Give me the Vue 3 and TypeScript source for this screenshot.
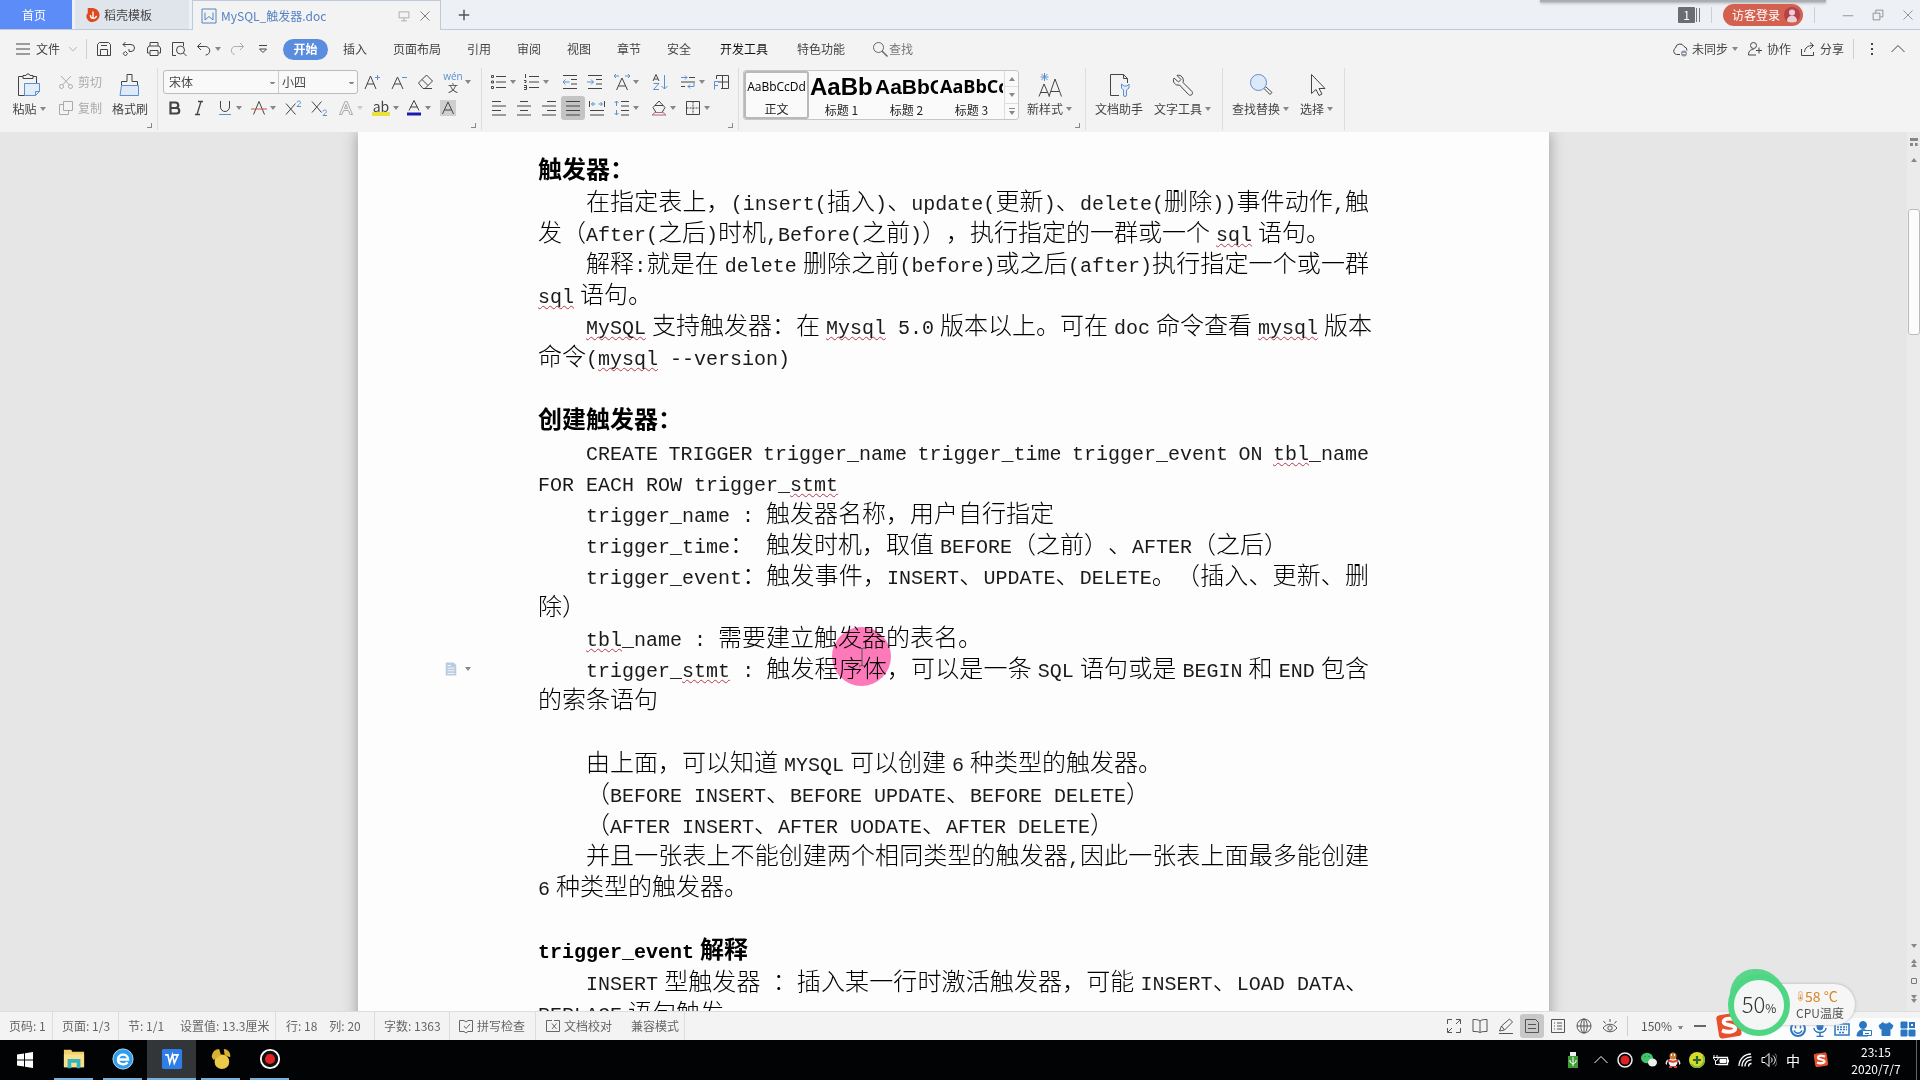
<script setup lang="ts">
import { ref } from 'vue'

interface Run { text: string; latin: boolean; err: boolean; before: boolean; after: boolean }
interface Line { src: string; indent?: boolean; full?: boolean; spread?: boolean }
interface Block { kind: 'h' | 'p' | 'blank'; lines: Line[] }
interface Tool { icon: string; label: string; w: number; size?: number; caret?: boolean; on?: boolean; dim?: boolean }

const icons: Record<string, string> = {
  menu: '<path d="M1 3h14M1 8h14M1 13h14"/>',
  chevDown: '<path d="M3 5.500l5 5 5-5"/>',
  chevUp: '<path d="M1.500 11L8 4.500 14.500 11"/>',
  save: '<path d="M1.500 14.500v-11l2-2h9l2 2v11zM4.500 14V8.500h7V14M5 4.500h6"/>',
  export: '<path d="M2 3.500h8a3.500 3.500 0 0 1 0 7H8M4.500 1L2 3.500 4.500 6M2 12.500l2.500-2 2 2-2 2.500zM8 10.500V8"/>',
  print: '<path d="M4 5V1.500h8V5M3.500 12h-2V7l1.500-2h10l1.500 2v5h-2M4 9.500h8v5H4z"/>',
  preview: '<path d="M5 14.500H1.500v-13h11V5"/><circle cx="9.500" cy="9" r="4"/><path d="M12.500 12l3 3"/>',
  undo: '<path d="M5 2L1.500 5.500 5 9M1.500 5.500h8a4 4 0 0 1 0 8.500"/>',
  redo: '<path d="M11 2l3.500 3.500L11 9M14.500 5.500h-7a4 4 0 0 0-2 8"/>',
  more: '<path d="M4 4.500h8M4.500 8l3.500 3.500L11.500 8z"/>',
  search: '<circle cx="6.500" cy="6.500" r="5"/><path d="M10 10l5.500 5.500" stroke-width="1.500"/>',
  cloud: '<path d="M8 13.500H4.500A3.500 3.500 0 0 1 3.500 7 4.500 4.500 0 0 1 12 5.500a4 4 0 0 1 3 4"/><circle cx="12" cy="12.500" r="3" fill="#8f96a8" stroke="none"/><path d="M10.500 12.500h3" stroke="#fff"/>',
  collab: '<circle cx="6.500" cy="4.500" r="3"/><path d="M1.500 14c0-5 3-5.500 5-5.500M1.500 14H9M12 6.500v6M9 9.500h6"/>',
  share: '<path d="M1.500 8v6.500h12V11M4.500 11C5 6.500 8 4.500 13 4.500M10 1.500l3.500 3L10 8"/>',
  dots: '<path d="M8 2v2M8 7v2M8 12v2" stroke-width="2"/>',
  cut: '<path d="M3 2l8.500 9M13 2L4.500 11"/><circle cx="3.500" cy="12.500" r="2"/><circle cx="12.500" cy="12.500" r="2"/>',
  copy: '<path d="M5.500 1.500h9v9h-9z"/><path d="M5 4.500H1.500v10h9V11"/>',
  paste: '<path d="M6 3.500H1.500v19H9M16 3.500h3.500V10M6 5.500v-3h3l1-1.500h2l1 1.500h3v3z"/><path d="M7.500 10.500h15v8l-4 4h-11z" fill="#e3edfa" stroke="#5b8fd0"/><path d="M22.500 18.500h-4v4" stroke="#5b8fd0"/>',
  brush: '<path d="M3.500 12.500V8.500H9v-7h5v7h5.500v4"/><path d="M3.500 12.500h17v10H2z" fill="#dfe9f8" stroke="#5b8fd0"/>',
  aPlus: '<path d="M1 15L6.500 2 12 15M3 10h7"/><path d="M13.500 1v5M11 3.500h5" stroke="#5b8fd0"/>',
  aMinus: '<path d="M1 15L6.500 3 12 15M3 10h7"/><path d="M11 3.500h5" stroke="#5b8fd0"/>',
  eraser: '<path d="M1.500 9l8-8 6 6-7.500 7.500H6zM5 5.500l6 6M6 14.500h9"/>',
  bold: '<path d="M3.500 2.500h5a2.500 2.500 0 0 1 0 5.500h-5zM3.500 8h6a2.700 2.700 0 0 1 0 5.500h-6z" stroke-width="2.200"/>',
  italic: '<path d="M6 1.500h5M3 14.500h5M9 1.500l-4 13" stroke-width="1.300"/>',
  underline: '<path d="M3.500 1v6a4.500 4.500 0 0 0 9 0V1"/><path d="M2 14.500h12" stroke="#5b8fd0"/>',
  strike: '<path d="M2.500 14.500L8 1.500l5.500 13"/><path d="M0 9h16" stroke="#d0504a"/>',
  sup: '<path d="M1 3.500l9.500 11M10.500 3.500L1 14.500"/><path d="M12 2.500c0-2 3.500-2 3.500 0 0 1.200-2 2-3.500 4h4" stroke="#5b8fd0"/>',
  sub: '<path d="M1 1.500l9.500 11M10.500 1.500L1 12.500"/><path d="M12 11.500c0-2 3.500-2 3.500 0 0 1.200-2 2-3.500 4h4" stroke="#5b8fd0"/>',
  outlineA: '<path d="M1.500 14.500L7 1.500h2l5.500 13h-2.500l-1.500-4h-5l-1.500 4zM6.500 8.500h3L8 4.500z"/>',
  fontColor: '<path d="M3 10.500L8 .5l5 10M4.500 7h7"/><path d="M1 14h14" stroke="#1a1ab0" stroke-width="3"/>',
  shadeA: '<path d="M0 0h16v16H0z" fill="#cfcfcf" stroke="none"/><path d="M2.500 14L8 2l5.500 12M4.500 10h7"/>',
  bullets: '<path d="M5 2.500h10M5 8h10M5 13.500h10"/><path d="M.5 1.500h2v2h-2zM.5 7h2v2h-2zM.5 12.500h2v2h-2z"/>',
  numbers: '<path d="M5 2.500h10M5 8h10M5 13.500h10M1.500 0v4M0 6.500h2v2H.5M0 11.500h2.500v4H0M0 13.500h2"/>',
  outdent: '<path d="M1 1.500h14M9 5.500h6M9 10h6M1 14.500h14"/><path d="M7.500 8H1M3.500 5.500L1 8l2.500 2.500" stroke="#5b8fd0"/>',
  indent: '<path d="M1 1.500h14M9 5.500h6M9 10h6M1 14.500h14"/><path d="M0 8h6.500M4 5.500L6.500 8 4 10.500" stroke="#5b8fd0"/>',
  aWidth: '<path d="M2.500 16L8 4l5.500 12M4.500 12h7"/><path d="M5 2H0M2 0L0 2l2 2M11 2h5M14 0l2 2-2 2" stroke="#5b8fd0"/>',
  sort: '<path d="M1 7l3-6.500L7 7M2 5h4"/><path d="M1.500 9.500H7l-5.500 6H7M12.500 1v14M9.500 12l3 3 3-3" stroke="#5b8fd0"/>',
  breaks: '<path d="M9 3.500h6M1 8h14M1 12.500h4"/><path d="M1 3.500h6M5 1.500l2 2-2 2M14 9v3.500H8M10 10.500l-2 2 2 2" stroke="#5b8fd0"/>',
  tableF: '<path d="M3.500 5V1.500h12v13H8M9.500 1.500v13M5 8h10.500"/><path d="M1.500 15.500v-8h4M1.500 11.500h3.500" stroke="#5b8fd0"/>',
  left: '<path d="M1 1.500h9M1 6h14M1 10.500h9M1 15h14"/>',
  center: '<path d="M4 1.500h8M1 6h14M4 10.500h8M1 15h14"/>',
  right: '<path d="M6 1.500h9M1 6h14M6 10.500h9M1 15h14"/>',
  justify: '<path d="M1 1.500h14M1 6h14M1 10.500h14M1 15h14"/>',
  distribute: '<path d="M.5 1v6M15.500 1v6M1 10.500h14M1 15h14"/><path d="M2.500 4h4M4.500 2l-2 2 2 2M13.500 4h-4M11.500 2l2 2-2 2" stroke="#5b8fd0"/>',
  spacing: '<path d="M7 1.500h8M7 6h8M7 10.500h8M7 15h8"/><path d="M2.500 1v5M.5 3l2-2 2 2M2.500 10v5M.5 13l2 2 2-2" stroke="#5b8fd0"/>',
  fill: '<path d="M2 7.500L8 1l6 6.500-3 5H5z"/><path d="M4 5.500h8"/><path d="M1 15l3-2.500h8l3 2.500z" stroke="#b06a78"/>',
  border: '<path d="M1.500 1.500h13v13h-13z"/><path d="M8 1.500v13M1.500 8h13" stroke-dasharray="2 1"/>',
  newStyle: '<path d="M1 23.500L6 11l5.500 12.500M2.500 19.500h7M11 23.500L17 6l6.500 17.500M13 18.500h8"/><path d="M6.500 0v8M2.500 4h8M3.500 1l6 6M9.500 1l-6 6" stroke="#5b8fd0"/>',
  docHelp: '<path d="M12 22.500H3.500v-21h13l4 4V10M16.500 1.500v4h4"/><path d="M14.500 11v4l2 2v5a1.500 1.500 0 0 0 3 0v-5l2.500-2v-4l-2 2h-3z" fill="#e3edfa" stroke="#5b8fd0"/>',
  wrench: '<path d="M6 2.500l4 4-2.500 2.500-4.500-4C1 9 4.500 13 8.500 12l9 9.500c2.500 2 5-.5 3.500-3L12 9.500c1.500-4-2-8.500-6-7z"/>',
  find: '<path d="M15 15.500l6 6 2-2-6.500-6z"/><circle cx="9.500" cy="9.500" r="8" fill="#dde9f8" stroke="#5b8fd0"/>',
  arrow: '<path d="M6.500 1.500v19l4.500-4 3 6 3-1.500-3-5.500h6z"/>',
  monitor: '<path d="M1.500 2.500h13v8h-13zM8 10.500v4M4 14.500h8"/>',
  close: '<path d="M2 2l12 12M14 2L2 14"/>',
  plus: '<path d="M8 1v14M1 8h14" stroke-width="2"/>',
  min: '<path d="M1 9h14"/>',
  restore: '<path d="M1.500 5.500h9v9h-9zM5 5V1.500h9.500v9H11"/>',
  writer: '<path d="M1 1h14v14H1z"/><path d="M4 4.500v7.500l4-3.500 4 3.500V4.500"/>',
  spell: '<path d="M6 13.500H1.500v-11H6l2 1.500 2-1.500h4.500v11H10l-2 1.500-2-1.500M6 8l2 2.500L12 6"/>',
  proof: '<path d="M5 13.500H1.500v-11H7M9 2.500h5.500v11H5M7 5.500l4.500 5.500M11.500 5.500L7 11"/>',
  full: '<path d="M1.500 6V1.500H6M10 1.500h4.500V6M14.500 10v4.500H10M6 14.500H1.500V10M10 6l4-4M6 10l-4 4"/>',
  book: '<path d="M8 3v11.500M8 3C6 1.500 4 1.500 1 1.500v12c3 0 5 0 7 1 2-1 4-1 7-1v-12c-3 0-5 0-7 1.500"/>',
  pen: '<path d="M1.500 13l2-5 8-7 3 3-8 8zM3.500 8l3 4M1 15.500h14"/>',
  page: '<path d="M1.500 1.500h10l3 3v10h-13zM4 6.500h8M4 10.500h8"/>',
  outline: '<path d="M1.500 1.500h13v13h-13zM4 5h1M7 5h5M4 8h1M7 8h5M4 11h1M7 11h5"/>',
  globe: '<circle cx="8" cy="8" r="7"/><ellipse cx="8" cy="8" rx="3.200" ry="7"/><path d="M1 8h14M8 1v14"/>',
  eye: '<path d="M1 10c4-5 10-5 14 0-4 5-10 5-14 0zM8 4V1M3.500 5.500L1.500 3M12.500 5.500l2-2.500"/><circle cx="8" cy="10" r="2.200"/>',
  face: '<circle cx="8" cy="8" r="7" stroke-width="2"/><path d="M5.500 4.500v3M10.500 4.500v3M4 9.500c1.500 3.500 6.500 3.500 8 0" stroke-width="1.500"/>',
  mic: '<rect x="5" y="0" width="6" height="9" rx="3" fill="#2b76c0"/><path d="M2 7c0 6 12 6 12 0M8 11.500V15M4.500 15.500h7" stroke-width="1.500"/>',
  keys: '<rect x="1" y="3" width="14" height="11" stroke-width="1.500"/><path d="M3 6h10M3 8.500h10M5 11.500h6" stroke-dasharray="2 1" stroke-width="1.500"/>',
  person: '<circle cx="7" cy="4" r="3.500" fill="#2b76c0"/><path d="M1 15c0-7 8-8 11-4v4z" fill="#2b76c0"/><path d="M6.500 9.500h9v5h-9z" fill="#fff"/><path d="M9 12.500h4"/>',
  shirt: '<path d="M5 1.500L1 4.500 2.500 8 4 7.500v7h8v-7l1.500.5L15 4.500l-4-3c-1 2-5 2-6 0z" fill="#2b76c0"/>',
  grid: '<path d="M1 1h6v6H1zM9 9h6v6H9zM1 9h6v6H1z" fill="#2b76c0"/><path d="M10 2h4v4h-4z" stroke-width="2"/>',
  usb: '<path d="M5 0h6v4H5z" fill="#eee" stroke="none"/><path d="M3 4h10v12H3z" fill="#3f9b36" stroke="none"/><path d="M8 5v9M5 8v2l3 2 3-2V8" stroke="#fff"/>',
  rec: '<circle cx="8" cy="8" r="7" stroke="#eee" stroke-width="1.500"/><circle cx="8" cy="8" r="4.500" fill="#e02020" stroke="none"/>',
  wechat: '<ellipse cx="6" cy="6" rx="6" ry="5.200" fill="#3fc46a" stroke="none"/><ellipse cx="11.500" cy="10.500" rx="4.500" ry="4" fill="#e9f3ea" stroke="none"/><path d="M4 4v1M8 4v1" stroke="#174"/>',
  qq: '<path d="M3 8c-2 2-2 4-1 4M13 8c2 2 2 4 1 4" stroke="#eee" stroke-width="1.500"/><ellipse cx="8" cy="10" rx="4.500" ry="4.500" fill="#f3f3f3" stroke="none"/><circle cx="8" cy="4" r="3.500" fill="#c77c3b" stroke="none"/><path d="M3 8c3 2 7 2 10 0M4 15h3M9 15h3" stroke="#e1352f" stroke-width="2"/><path d="M6.500 2v2M9.500 2v2" stroke="#fff"/>',
  guard: '<circle cx="8" cy="8" r="8" fill="#d9d92c" stroke="none"/><path d="M2 12a7 7 0 0 0 12-8" stroke="#7dbb3a" stroke-width="2"/><path d="M8 4v8M4 8h8" stroke="#24672d" stroke-width="2.200"/>',
  battery: '<path d="M5 5.500h9.500v7H5M15.500 7.500v3" stroke-width="1.300"/><path d="M7 7.500h6v3H7z" fill="#fff"/><path d="M1 3v2M4 3v2M0 5.500h5v2L2.500 9zM2.500 9v3.500H5"/>',
  wifi: '<path d="M2 14A12 12 0 0 1 14 2M5 14.500a9 9 0 0 1 9.500-9.500M8 14.500A6 6 0 0 1 14.500 8M11.500 14.500a3 3 0 0 1 3-3" stroke-width="1.300"/>',
  volume: '<path d="M1 5.500h3l4-4v13l-4-4H1zM10 5.500c1.500 1.500 1.500 3.500 0 5M12 3.500c3 3 3 6 0 9"/><path d="M14 1.500c3 4 3 9 0 13" stroke="#777"/>',
  sogou: '<rect x="1.500" y="1" width="13" height="13.500" rx="2" fill="#e8502c" stroke="none" transform="rotate(-9 8 8)"/><path d="M12 4.500C8 3 4.500 4 5 6c.5 2 6 1 6.500 3.200.3 2-4 2.800-7.500 1.300" stroke="#fff" stroke-width="2.200"/>',
  thermo: '<path d="M5 9.500V3a3 3 0 0 1 6 0v6.500a4 4 0 1 1-6 0zM8 5v7"/><circle cx="8" cy="12" r="1.500" fill="currentColor"/>',
  docMark: '<path d="M2 .5h9l3 3v12H2z" fill="#b9cbe0" stroke="none"/><path d="M4 4h4M4 7h8M4 10h8M4 13h8" stroke="#fff"/>',
  windows: '<path d="M0 2.500l7-1v6H0zM8 1.300L16 0v7.500H8zM0 8.500h7v6l-7-1zM8 8.500h8V16l-8-1.300z" fill="#fff" stroke="none"/>',
  folder: '<path d="M1 2h8l1 2h13v17H1z" fill="#f2cf69" stroke="none"/><path d="M1 7h22v14H1z" fill="#fbe08c" stroke="none"/><path d="M5 22V12h14v10h-4v-6H9v6z" fill="#35b5c0" stroke="none"/>',
  ie: '<circle cx="12" cy="12" r="11" fill="#2f9df0" stroke="#bfe6ff"/><path d="M6 12.500h11.500c0-7-11-7-11 0 0 6 8 6.500 10.500 3" stroke="#fff" stroke-width="2.600"/>',
  wps: '<rect x="1" y="1" width="22" height="22" rx="2" fill="#2f7de8" stroke="none"/><path d="M4.500 7.500h3l2 9 3-9 2 9 4-9h-5" stroke="#fff" stroke-width="1.800"/>',
  navicat: '<circle cx="13" cy="15" r="8" fill="#ebc949" stroke="none"/><path d="M2 10C2 4 6 1 10 1l2 7-8 5zM15 1c5 0 8 5 7 9l-6-2z" fill="#d9b02f" stroke="none"/>',
  recorder: '<circle cx="12" cy="12" r="10" fill="#111" stroke="#fff" stroke-width="2"/><circle cx="12" cy="12" r="5.500" fill="#e22323" stroke="none"/>',
}

const menus = [
  { t: '插入', w: 50 }, { t: '页面布局', w: 74 }, { t: '引用', w: 50 }, { t: '审阅', w: 50 },
  { t: '视图', w: 50 }, { t: '章节', w: 50 }, { t: '安全', w: 53 }, { t: '开发工具', w: 77 }, { t: '特色功能', w: 75 },
]

const quick: Tool[] = [
  { icon: 'save', label: '保存', w: 25 }, { icon: 'export', label: '输出', w: 25 },
  { icon: 'print', label: '打印', w: 25 }, { icon: 'preview', label: '预览', w: 25 },
  { icon: 'undo', label: '撤销', w: 33, caret: true }, { icon: 'redo', label: '恢复', w: 26, dim: true },
  { icon: 'more', label: '更多', w: 28 },
]

const fontTop: Tool[] = [
  { icon: 'aPlus', label: '增大字号', w: 27 }, { icon: 'aMinus', label: '减小字号', w: 26 },
  { icon: 'eraser', label: '清除格式', w: 27 },
]
const fontA: Tool[] = [
  { icon: 'bold', label: '加粗', w: 25 }, { icon: 'italic', label: '倾斜', w: 25 },
  { icon: 'underline', label: '下划线', w: 34, caret: true }, { icon: 'strike', label: '删除线', w: 34, caret: true },
  { icon: 'sup', label: '上标', w: 26 }, { icon: 'sub', label: '下标', w: 27 },
  { icon: 'outlineA', label: '文字效果', w: 34, caret: true, dim: true },
]
const fontB: Tool[] = [
  { icon: 'fontColor', label: '字体颜色', w: 34, caret: true }, { icon: 'shadeA', label: '字符底纹', w: 34 },
]
const paraTop: Tool[] = [
  { icon: 'bullets', label: '项目符号', w: 33, caret: true }, { icon: 'numbers', label: '编号', w: 38, caret: true },
  { icon: 'outdent', label: '减少缩进', w: 25 }, { icon: 'indent', label: '增加缩进', w: 27 },
  { icon: 'aWidth', label: '中文版式', w: 38, caret: true }, { icon: 'sort', label: '排序', w: 28 },
  { icon: 'breaks', label: '换行', w: 33, caret: true }, { icon: 'tableF', label: '制表位', w: 20 },
]
const paraBottom: Tool[] = [
  { icon: 'left', label: '左对齐', w: 25 }, { icon: 'center', label: '居中', w: 25 },
  { icon: 'right', label: '右对齐', w: 25 }, { icon: 'justify', label: '两端对齐', w: 24, on: true },
  { icon: 'distribute', label: '分散对齐', w: 25 }, { icon: 'spacing', label: '行距', w: 37, caret: true },
  { icon: 'fill', label: '底纹', w: 34, caret: true }, { icon: 'border', label: '边框', w: 32, caret: true },
]

const styles = [
  { name: '正文', sample: 'AaBbCcDd', cls: 's0' }, { name: '标题 1', sample: 'AaBb', cls: 's1' },
  { name: '标题 2', sample: 'AaBbC', cls: 's2' }, { name: '标题 3', sample: 'AaBbCc', cls: 's3' },
]

const views = ['full', 'book', 'pen', 'page', 'outline', 'globe', 'eye']
const ime = ['face', 'mic', 'keys', 'person', 'shirt', 'grid']
const tray = ['rec', 'wechat', 'qq', 'guard', 'battery', 'wifi', 'volume']
const tasks = ['folder', 'ie', 'wps', 'navicat', 'recorder']

const fontName = ref('宋体')
const fontSize = ref('小四')
const zoomLevel = ref('150%')
const query = ref('')

/* Text between ~ marks is flagged by the spelling checker. */
const blocks: Block[] = [
  { kind: 'h', lines: [{ src: '触发器：' }] },
  { kind: 'p', lines: [
    { src: '在指定表上，(insert(插入)、update(更新)、delete(删除))事件动作,触', indent: true, full: true },
    { src: '发（After(之后)时机,Before(之前)），执行指定的一群或一个~sql~语句。' },
  ] },
  { kind: 'p', lines: [
    { src: '解释:就是在delete删除之前(before)或之后(after)执行指定一个或一群', indent: true, full: true },
    { src: '~sql~语句。' },
  ] },
  { kind: 'p', lines: [
    { src: '~MySQL~支持触发器：在~Mysql~ 5.0版本以上。可在doc命令查看~mysql~版本', indent: true, full: true },
    { src: '命令(~mysql~ --version)' },
  ] },
  { kind: 'blank', lines: [] },
  { kind: 'h', lines: [{ src: '创建触发器：' }] },
  { kind: 'p', lines: [
    { src: 'CREATE TRIGGER trigger_name trigger_time trigger_event ON ~tbl~_name', indent: true, spread: true },
    { src: 'FOR EACH ROW trigger_~stmt~' },
  ] },
  { kind: 'p', lines: [{ src: 'trigger_name : 触发器名称，用户自行指定', indent: true }] },
  { kind: 'p', lines: [{ src: 'trigger_time： 触发时机，取值BEFORE（之前）、AFTER（之后）', indent: true }] },
  { kind: 'p', lines: [
    { src: 'trigger_event：触发事件，INSERT、UPDATE、DELETE。（插入、更新、删', indent: true, full: true },
    { src: '除）' },
  ] },
  { kind: 'p', lines: [{ src: '~tbl~_name : 需要建立触发器的表名。', indent: true }] },
  { kind: 'p', lines: [
    { src: 'trigger_~stmt~ : 触发程序体，可以是一条SQL语句或是BEGIN和END包含', indent: true, full: true },
    { src: '的索条语句' },
  ] },
  { kind: 'blank', lines: [] },
  { kind: 'p', lines: [{ src: '由上面，可以知道MYSQL可以创建6种类型的触发器。', indent: true }] },
  { kind: 'p', lines: [{ src: '（BEFORE INSERT、BEFORE UPDATE、BEFORE DELETE）', indent: true }] },
  { kind: 'p', lines: [{ src: '（AFTER INSERT、AFTER UODATE、AFTER DELETE）', indent: true }] },
  { kind: 'p', lines: [
    { src: '并且一张表上不能创建两个相同类型的触发器,因此一张表上面最多能创建', indent: true, full: true },
    { src: '6种类型的触发器。' },
  ] },
  { kind: 'blank', lines: [] },
  { kind: 'h', lines: [{ src: 'trigger_event解释' }] },
  { kind: 'p', lines: [
    { src: 'INSERT型触发器 ：插入某一行时激活触发器，可能INSERT、LOAD DATA、', indent: true, full: true },
    { src: 'REPLACE语句触发。' },
  ] },
]

const isHan = (c: string) => /[\u4e00-\u9fff]/.test(c)
const isWord = (c: string) => /[A-Za-z0-9]/.test(c)

function runs(src: string): Run[] {
  const out: Run[] = []
  src.split('~').forEach((piece, i) => {
    for (const text of piece.match(/[\x20-\x7e]+|[^\x20-\x7e]+/g) ?? []) {
      out.push({ text, latin: text.charCodeAt(0) < 128, err: i % 2 === 1, before: false, after: false })
    }
  })
  out.forEach((r, i) => {
    if (!r.latin) return
    const prev = out[i - 1]?.text.slice(-1) ?? ''
    const next = out[i + 1]?.text[0] ?? ''
    r.before = isHan(prev) && isWord(r.text[0])
    r.after = isHan(next) && isWord(r.text.slice(-1))
  })
  return out
}
</script>

<template>
  <div class="app">
    <header class="titlebar">
      <a class="tab home" href="#">首页</a>
      <a class="tab docer" href="#">
        <svg class="flame" viewBox="0 0 16 16"><path d="M2 0h6c10 2 10 14 0 16H5C-1 13 0 7 2 6z" fill="#dd4a20" /><path d="M8 4v8M5 8c0 5 6 5 7 1" fill="none" stroke="#fff" stroke-width="1.500" /></svg>
        稻壳模板
      </a>
      <a class="tab file" href="#">
        <svg class="i" viewBox="0 0 16 16" v-html="icons.writer"></svg>
        <span class="fname">MySQL_触发器.doc</span>
        <svg class="i small grey" viewBox="0 0 16 16" v-html="icons.monitor"></svg>
        <svg class="i small dark" viewBox="0 0 16 16" v-html="icons.close"></svg>
      </a>
      <button class="newtab" aria-label="新建"><svg class="i small" viewBox="0 0 16 16" v-html="icons.plus"></svg></button>
      <span class="edge"></span>
      <div class="winctl">
        <span class="count">1</span><span class="bars"></span>
        <span class="vsep short"></span>
        <button class="login">访客登录<svg viewBox="0 0 16 16"><circle cx="8" cy="8" r="8" fill="#b0434b" /><circle cx="8" cy="5.500" r="3" fill="#f0cfd0" /><path d="M3 14c0-7 10-7 10 0-2 2-8 2-10 0z" fill="#f0cfd0" /></svg></button>
        <span class="vsep short"></span>
        <div class="wbtns">
          <button class="wbtn" aria-label="最小化"><svg class="i small" viewBox="0 0 16 16" v-html="icons.min"></svg></button>
          <button class="wbtn" aria-label="还原"><svg class="i small" viewBox="0 0 16 16" v-html="icons.restore"></svg></button>
          <button class="wbtn" aria-label="关闭"><svg class="i small" viewBox="0 0 16 16" v-html="icons.close"></svg></button>
        </div>
      </div>
    </header>

    <nav class="menubar">
      <button class="filebtn"><svg class="i" viewBox="0 0 16 16" v-html="icons.menu"></svg>文件<svg class="i small pale" viewBox="0 0 16 16" v-html="icons.chevDown"></svg></button>
      <span class="vsep"></span>
      <div class="quick">
        <button v-for="t in quick" :key="t.icon" class="tool" :class="{ dim: t.dim }" :style="{ width: t.w + 'px' }" :aria-label="t.label">
          <svg class="i" viewBox="0 0 16 16" v-html="icons[t.icon]"></svg><i v-if="t.caret" class="caret"></i>
        </button>
      </div>
      <button class="pill">开始</button>
      <button v-for="m in menus" :key="m.t" class="menu" :class="{ strong: m.t === '开发工具' }" :style="{ width: m.w + 'px' }">{{ m.t }}</button>
      <label class="find"><svg class="i" viewBox="0 0 16 16" v-html="icons.search"></svg><input v-model="query" placeholder="查找" aria-label="查找" /></label>
      <div class="sharebox">
        <button class="act"><svg class="i" viewBox="0 0 16 16" v-html="icons.cloud"></svg>未同步<i class="caret"></i></button>
        <button class="act"><svg class="i" viewBox="0 0 16 16" v-html="icons.collab"></svg>协作</button>
        <button class="act"><svg class="i" viewBox="0 0 16 16" v-html="icons.share"></svg>分享</button>
        <span class="vsep"></span>
        <button class="act" aria-label="更多"><svg class="i" viewBox="0 0 16 16" v-html="icons.dots"></svg></button>
        <button class="act" aria-label="收起"><svg class="i" viewBox="0 0 16 16" v-html="icons.chevUp"></svg></button>
      </div>
    </nav>

    <section class="ribbon">
      <div class="group clip">
        <button class="big w-paste"><svg class="i big-i" viewBox="0 0 24 24" v-html="icons.paste"></svg><span>粘贴<i class="caret"></i></span></button>
        <div class="pair">
          <button class="dim"><svg class="i" viewBox="0 0 16 16" v-html="icons.cut"></svg>剪切</button>
          <button class="dim"><svg class="i" viewBox="0 0 16 16" v-html="icons.copy"></svg>复制</button>
        </div>
        <button class="big w-brush"><svg class="i big-i" viewBox="0 0 24 24" v-html="icons.brush"></svg><span>格式刷</span></button>
        <i class="corner"></i>
      </div>
      <div class="group font">
        <div class="row">
          <div class="combo">
            <select v-model="fontName" class="c1" aria-label="字体"><option>宋体</option></select>
            <select v-model="fontSize" class="c2" aria-label="字号"><option>小四</option></select>
          </div>
          <button v-for="t in fontTop" :key="t.icon" class="tool" :style="{ width: t.w + 'px' }" :aria-label="t.label"><svg class="i" viewBox="0 0 16 16" v-html="icons[t.icon]"></svg></button>
          <button class="tool pinyin"><span><b>wén</b><em>文</em></span><i class="caret"></i></button>
        </div>
        <div class="row inset">
          <button v-for="t in fontA" :key="t.icon" class="tool" :class="{ dim: t.dim }" :style="{ width: t.w + 'px' }" :aria-label="t.label">
            <svg class="i" viewBox="0 0 16 16" v-html="icons[t.icon]"></svg><i v-if="t.caret" class="caret"></i>
          </button>
          <button class="tool mark"><span>ab</span><i class="caret"></i></button>
          <button v-for="t in fontB" :key="t.icon" class="tool" :style="{ width: t.w + 'px' }" :aria-label="t.label">
            <svg class="i" viewBox="0 0 16 16" v-html="icons[t.icon]"></svg><i v-if="t.caret" class="caret"></i>
          </button>
        </div>
        <i class="corner"></i>
      </div>
      <div class="group para">
        <div class="row">
          <button v-for="t in paraTop" :key="t.icon" class="tool" :style="{ width: t.w + 'px' }" :aria-label="t.label">
            <svg class="i" viewBox="0 0 16 16" v-html="icons[t.icon]"></svg><i v-if="t.caret" class="caret"></i>
          </button>
        </div>
        <div class="row">
          <button v-for="t in paraBottom" :key="t.icon" class="tool" :class="{ on: t.on }" :style="{ width: t.w + 'px' }" :aria-label="t.label">
            <svg class="i" viewBox="0 0 16 16" v-html="icons[t.icon]"></svg><i v-if="t.caret" class="caret"></i>
          </button>
        </div>
        <i class="corner"></i>
      </div>
      <div class="group styleset">
        <div class="gallery">
          <button v-for="s in styles" :key="s.name" class="style" :class="s.cls"><span class="sample">{{ s.sample }}</span><span>{{ s.name }}</span></button>
          <div class="gscroll"><button aria-label="上"><i class="caret up"></i></button><button aria-label="下"><i class="caret"></i></button><button class="last" aria-label="展开"><i class="line1"></i><i class="caret"></i></button></div>
        </div>
        <button class="big w-style"><svg class="i big-i" viewBox="0 0 24 24" v-html="icons.newStyle"></svg><span>新样式<i class="caret"></i></span></button>
        <i class="corner"></i>
      </div>
      <div class="group tools">
        <button class="big"><svg class="i big-i" viewBox="0 0 24 24" v-html="icons.docHelp"></svg><span>文档助手</span></button>
        <button class="big"><svg class="i big-i" viewBox="0 0 24 24" v-html="icons.wrench"></svg><span>文字工具<i class="caret"></i></span></button>
      </div>
      <div class="group tools">
        <button class="big"><svg class="i big-i" viewBox="0 0 24 24" v-html="icons.find"></svg><span>查找替换<i class="caret"></i></span></button>
        <button class="big"><svg class="i big-i" viewBox="0 0 24 24" v-html="icons.arrow"></svg><span>选择<i class="caret"></i></span></button>
      </div>
    </section>

    <main class="work">
      <div class="canvas">
        <article class="page">
          <template v-for="(b, bi) in blocks" :key="bi">
            <component :is="b.kind === 'h' ? 'h2' : 'p'" :class="b.kind">
              <span v-for="(l, li) in b.lines" :key="li" class="line" :class="{ indent: l.indent, full: l.full, spread: l.spread }">
                <template v-if="l.spread"><span v-for="(w, wi) in l.src.split(' ')" :key="wi"><span v-for="(r, ri) in runs(w)" :key="ri" class="latin" :class="{ err: r.err }">{{ r.text }}</span></span></template>
                <template v-else><span v-for="(r, ri) in runs(l.src)" :key="ri" :class="{ latin: r.latin, err: r.err, before: r.before, after: r.after }">{{ r.text }}</span></template>
              </span>
            </component>
          </template>
          <button class="docmark" aria-label="段落"><svg class="i" viewBox="0 0 16 16" v-html="icons.docMark"></svg><i class="caret"></i></button>
          <span class="pointer"><svg viewBox="0 0 10 20"><path d="M2 1h2l1 1 1-1h2M5 2v16M2 19h2l1-1 1 1h2" fill="none" stroke="#555" /></svg></span>
        </article>
      </div>
      <aside class="scroll">
        <div class="stop"><i class="tri"></i><i class="caret up"></i></div>
        <div class="thumb"></div>
        <div class="sbot"><i class="caret"></i><span><i class="caret up"></i><i class="caret up"></i></span><i class="box"></i><span><i class="caret"></i><i class="caret"></i></span></div>
      </aside>
    </main>

    <footer class="status">
      <span class="st w1">页码: 1</span>
      <span class="st w2">页面: 1/3</span>
      <span class="st w3"><span>节: 1/1</span><span>设置值: 13.3厘米</span></span>
      <span class="st w4"><span>行: 18</span><span>列: 20</span></span>
      <span class="st w5">字数: 1363</span>
      <button class="st w6"><svg class="i" viewBox="0 0 16 16" v-html="icons.spell"></svg>拼写检查</button>
      <span class="st w7"><span class="chk"><svg class="i" viewBox="0 0 16 16" v-html="icons.proof"></svg>文档校对</span><span>兼容模式</span></span>
      <div class="views">
        <button v-for="v in views" :key="v" :class="{ on: v === 'page' }" :aria-label="v"><svg class="i" viewBox="0 0 16 16" v-html="icons[v]"></svg></button>
        <span class="vsep"></span>
        <label class="zoom"><select v-model="zoomLevel" aria-label="显示比例"><option>150%</option></select></label>
        <button class="minus" aria-label="缩小"></button>
        <div class="ime">
          <svg class="i slogo" viewBox="0 0 16 16" v-html="icons.sogou"></svg>
          <svg v-for="m in ime" :key="m" class="i" viewBox="0 0 16 16" v-html="icons[m]"></svg>
        </div>
      </div>
    </footer>

    <footer class="taskbar">
      <button class="start" aria-label="开始"><svg class="i" viewBox="0 0 16 16" v-html="icons.windows"></svg></button>
      <button v-for="t in tasks" :key="t" class="task" :class="{ active: t === 'wps' }" :aria-label="t"><svg class="i" viewBox="0 0 24 24" v-html="icons[t]"></svg></button>
      <div class="tray">
        <svg class="i usb" viewBox="0 0 16 16" v-html="icons.usb"></svg>
        <svg class="i" viewBox="0 0 16 16" v-html="icons.chevUp"></svg>
        <svg v-for="t in tray" :key="t" class="i" viewBox="0 0 16 16" v-html="icons[t]"></svg>
        <span class="zh">中</span>
        <svg class="i" viewBox="0 0 16 16" v-html="icons.sogou"></svg>
        <time>23:15<br />2020/7/7</time>
        <span class="peek"></span>
      </div>
    </footer>

    <div class="monitor">
      <div class="temp"><span class="deg"><svg class="i" viewBox="0 0 16 16" v-html="icons.thermo"></svg>58 °C</span><span>CPU温度</span></div>
      <div class="blob"></div>
      <div class="ball"><span>50<small>%</small></span></div>
    </div>
  </div>
</template>

<style>
body { margin: 0; overflow: hidden; }
</style>

<style scoped>
.app { position: relative; height: 100vh; display: flex; flex-direction: column; overflow: hidden; background: #e6e6e6; color: #444; font: 12px/16px "Noto Sans CJK SC", sans-serif; }
* { box-sizing: border-box; }
button { border: 0; padding: 0; margin: 0; background: none; font: inherit; color: inherit; display: flex; align-items: center; white-space: nowrap; flex-shrink: 0; }
a { color: inherit; text-decoration: none; }
select, input { font: inherit; color: inherit; border: 0; background: none; padding: 0; margin: 0; outline: 0; appearance: none; }
.i { width: 16px; height: 16px; fill: none; stroke: currentColor; flex-shrink: 0; display: block; }
.small { width: 12px; height: 12px; }
.pale { color: #999; }
.grey { color: #999; }
.dark { color: #555; }
.dim { color: #aaa; }
.caret { display: inline-block; width: 0; height: 0; border: 3px solid transparent; border-top: 4px solid #888; border-bottom: 0; flex-shrink: 0; }
.caret.up { border-top: 0; border-bottom: 4px solid #888; }
.vsep { width: 1px; height: 20px; background: #cfcfcf; flex-shrink: 0; }

.titlebar { display: flex; height: 30px; flex-shrink: 0; background: #edf1f6; border-bottom: 1px solid #bccadb; }
.tab { display: flex; align-items: center; padding-bottom: 0; flex-shrink: 0; }
.home { width: 72px; justify-content: center; background: #5b8cf8; color: #fff; padding-right: 4px; }
.docer { width: 114px; margin: 0 3px; padding-left: 11px; gap: 4px; background: #e0e4eb; }
.flame { width: 14px; height: 16px; }
.file { width: 249px; height: 30px; padding: 0 9px 0 8px; gap: 4px; background: #f3f3f3; border: 1px solid #bccadb; border-bottom: 0; color: #5482c4; }
.file .i + .fname { flex: 1; }
.fname { white-space: nowrap; }
.grey + .dark { margin-left: 5px; }
.newtab { width: 46px; justify-content: center; color: #555; }
.edge { width: 286px; height: 2px; margin-left: auto; background: #aaadb2; box-shadow: 0 1px 3px #999; }
.winctl { display: flex; align-items: center; gap: 11px; padding-right: 2px; margin-left: -148px; }
.count { width: 17px; height: 16px; background: #6a6e72; color: #fff; text-align: center; border-radius: 1px; }
.bars { width: 4px; height: 14px; margin-left: -10px; border: solid #777; border-width: 0 1px; }
.short { height: 16px; }
.login { height: 22px; padding: 0 3px 0 9px; border-radius: 11px; background: #d4604f; color: #fff; gap: 4px; }
.login svg { width: 16px; height: 16px; }
.wbtns { display: flex; gap: 10px; padding-left: 12px; }
.wbtn { width: 20px; justify-content: center; color: #777; }

.menubar { display: flex; align-items: center; height: 38px; flex-shrink: 0; background: #f3f3f3; }
.filebtn { width: 86px; padding-left: 15px; gap: 5px; }
.filebtn .small { margin-left: 2px; }
.quick { display: flex; padding-left: 9px; }
.tool { height: 24px; gap: 3px; }
.tool.dim .caret { border-top-color: #ccc; }
.pill { width: 45px; height: 21px; justify-content: center; border-radius: 11px; background: #5b8ddf; color: #fff; font-weight: 700; margin-right: 15px; }
.strong { color: #111; }
.find { display: flex; align-items: center; gap: 1px; color: #666; }
.find input { width: 60px; }
.find input::placeholder { color: #777; opacity: 1; }
.sharebox { display: flex; align-items: center; gap: 9px; margin-left: auto; padding-right: 14px; }
.act { gap: 4px; }
.sharebox .vsep + .act { margin: 0 1px; }

.ribbon { display: flex; height: 64px; flex-shrink: 0; background: #f3f3f3; }
.group { position: relative; display: flex; height: 62px; border-right: 1px solid #ddd; flex-shrink: 0; }
.corner { position: absolute; right: 5px; bottom: 2px; width: 5px; height: 5px; border: solid #888; border-width: 0 1px 1px 0; }
.big { flex-direction: column; gap: 4px; padding-top: 5px; color: #444; align-items: center; height: 56px; }
.big span { display: flex; align-items: center; gap: 3px; }
.big-i { width: 24px; height: 24px; color: #444; }
.clip { width: 158px; padding-left: 12px; }
.w-paste { width: 34px; }
.pair { display: flex; flex-direction: column; gap: 2px; padding: 2px 0 0 12px; }
.pair button { height: 24px; gap: 4px; }
.w-brush { margin-left: 10px; }
.font, .para { flex-direction: column; padding-top: 2px; gap: 2px; }
.row { display: flex; height: 24px; align-items: center; }
.font { width: 324px; padding-left: 5px; }
.combo { display: flex; width: 195px; height: 24px; border: 1px solid #bbb; border-radius: 3px; background: #f9f9f9; margin-right: 6px; }
.combo select { height: 22px; padding-left: 5px; background: linear-gradient(#888, #888) no-repeat right 3px center / 5px 1px, linear-gradient(#888, #888) no-repeat right 4px top 11px / 3px 2px; }
.c1 { width: 115px; border-right: 1px solid #ccc; }
.c2 { width: 78px; }
.combo .c2 { padding-left: 3px; }
.inset { padding-left: 4px; }
.pinyin span { display: flex; flex-direction: column; align-items: center; width: 18px; }
.pinyin b { font: 10px/11px "Open Sans", sans-serif; color: #5b8fd0; }
.pinyin em { font: 10px/12px "Noto Sans CJK SC", sans-serif; }
.mark { width: 34px; }
.mark span { width: 18px; height: 16px; line-height: 12px; font-size: 14px; border-bottom: 4px solid #e8e23a; }
.para { width: 257px; padding-left: 9px; }
.tool.on { background: #c4c4c4; border-radius: 3px; justify-content: center; margin: 0 4px 0 -5px; }
.styleset { width: 347px; padding: 2px 0 0 4px; }
.gallery { display: flex; width: 276px; height: 50px; border: 1px solid #c6c6c6; border-radius: 3px; background: #fafafa; }
.style { width: 65px; flex-direction: column; justify-content: flex-end; overflow: hidden; color: #222; padding-bottom: 1px; }
.sample { display: flex; align-items: center; width: 63px; height: 31px; overflow: hidden; color: #000; }
.s0 { border: 2px solid #b9b9b9; border-radius: 3px; padding-bottom: 0; }
.s0 .sample { justify-content: center; width: 61px; font: 12px/30px "Open Sans", sans-serif; }
.s1 .sample { font: 700 24px/31px "Liberation Sans", sans-serif; }
.s2 .sample { font: 700 21px/31px "Liberation Sans", sans-serif; }
.s3 .sample { font: 700 18px/31px "Open Sans", sans-serif; }
.gscroll { display: flex; flex-direction: column; width: 14px; border-left: 1px solid #ddd; }
.gscroll button { flex: 1; justify-content: center; border-bottom: 1px solid #ddd; }
.gscroll .last { border-bottom: 0; flex-direction: column; gap: 2px; }
.line1 { width: 6px; height: 1px; background: #888; }
.w-style { margin: -2px 0 0 8px; }
.tools { padding: 0 11px 0 9px; gap: 11px; }

.work { flex: 1; min-height: 0; display: flex; overflow: hidden; background: #e6e6e6; }
.canvas { flex: 1; display: flex; justify-content: center; align-items: flex-start; }
.page { position: relative; width: 1191px; padding: 20px 180px 60px; background: #fdfdfd; box-shadow: 0 0 14px #999; color: #000; font: 300 24px/31px "Noto Sans CJK SC", sans-serif; text-spacing-trim: space-all; }
.page h2 { margin: 0; font: inherit; font-weight: 700; line-height: 32px; }
.page p { margin: 0; }
.page .blank { height: 32px; }
.line { display: block; white-space: nowrap; height: 31px; }
h2 .line { height: 32px; }
.indent { padding-left: 48px; }
.full { text-align: justify; text-align-last: justify; }
.spread { display: flex; justify-content: space-between; }
.latin { font-family: "Liberation Mono", monospace; font-size: 20px; font-weight: 400; color: #1a1a1a; }
h2 .latin { font-weight: 700; color: #000; }
.before { margin-left: 6px; }
.after { margin-right: 6px; }
.err { text-decoration: underline wavy #b8394a 1px; text-underline-offset: 2px; text-decoration-skip-ink: none; }
.docmark { position: absolute; left: 86px; top: 529px; gap: 7px; }
.docmark .i { width: 14px; }
.pointer { position: absolute; left: 474px; top: 495px; width: 59px; height: 59px; border-radius: 50%; background: #ff7abb; mix-blend-mode: multiply; display: flex; align-items: center; justify-content: center; }
.pointer svg { width: 10px; height: 20px; }
.scroll { width: 13px; display: flex; flex-direction: column; background: #ebebeb; align-items: center; }
.stop { height: 77px; padding-top: 6px; display: flex; flex-direction: column; align-items: center; gap: 12px; }
.tri { width: 8px; height: 8px; border-top: 3px solid #888; border-bottom: 3px dotted #888; }
.thumb { width: 12px; height: 126px; background: #fcfcfc; border: 1px solid #bbb; border-radius: 3px; }
.sbot { margin-top: auto; padding-bottom: 8px; display: flex; flex-direction: column; align-items: center; gap: 11px; }
.sbot span { display: flex; flex-direction: column; }
.box { width: 6px; height: 6px; border: 1px solid #777; border-radius: 1px; }

.status { display: flex; height: 29px; flex-shrink: 0; background: #f3f3f3; border-top: 1px solid #ddd; color: #666; align-items: center; }
.st { display: flex; align-items: center; height: 28px; padding-left: 9px; border-right: 1px solid #ddd; white-space: nowrap; }
.w1 { width: 53px; }
.w2 { width: 66px; }
.w3 { width: 157px; gap: 16px; }
.w4 { width: 99px; gap: 12px; padding-left: 10px; }
.w5 { width: 75px; }
button.w6 { width: 86px; padding-left: 8px; gap: 3px; border-right: 1px solid #ddd; }
.w7 { width: 149px; gap: 19px; }
.chk { display: flex; gap: 3px; }
.views { display: flex; align-items: center; margin-left: auto; height: 28px; color: #555; }
.views button { width: 24px; height: 24px; justify-content: center; margin-right: 2px; }
.views button.on { background: #c8c8c8; border-radius: 3px; }
.views .vsep { margin-left: 3px; }
.zoom { margin-left: 13px; }
.zoom select { width: 44px; background: linear-gradient(#888, #888) no-repeat right 2px center / 5px 1px, linear-gradient(#888, #888) no-repeat right 3px top 9px / 3px 2px; }
.views .minus { width: 12px; height: 2px; background: #666; margin: 0 8px 0 9px; }
.ime { display: flex; align-items: center; gap: 6px; width: 206px; height: 22px; padding-right: 4px; background: linear-gradient(90deg, transparent 20px, #fbfdff 20px); color: #2b76c0; margin-top: 6px; }
.ime .slogo { width: 30px; height: 28px; margin: -6px auto 0 0; }

.taskbar { display: flex; height: 40px; flex-shrink: 0; background: #020305; color: #fff; }
.start { width: 49px; justify-content: center; }
.task { width: 39px; height: 40px; justify-content: center; border-bottom: 2px solid #78b0dc; margin-left: 5px; margin-right: 5px; }
.task .i { width: 24px; height: 22px; }
.task.active { width: 49px; background: #333638; margin: 0; }
.tray { display: flex; align-items: center; margin-left: auto; gap: 8px; }
.usb { margin-right: 4px; }
.zh { width: 14px; font-size: 14px; margin-left: 1px; }
.zh + .i { margin-left: 5px; }
.tray time { width: 70px; margin-left: 4px; text-align: center; line-height: 17px; }
.peek { width: 4px; height: 40px; margin-left: -3px; border-left: 1px solid #666; }

.monitor { position: absolute; right: 65px; bottom: 45px; width: 129px; height: 66px; }
.temp { position: absolute; right: 0; top: 15px; width: 97px; height: 41px; padding-left: 38px; border-radius: 21px; background: #f6f6f6; box-shadow: 0 0 3px #aaa; line-height: 16px; padding-top: 3px; display: flex; flex-direction: column; color: #555; white-space: nowrap; }
.deg { display: flex; align-items: center; color: #d98328; font-size: 14px; line-height: 18px; }
.deg .i { width: 9px; height: 14px; }
.blob { position: absolute; left: 4px; top: 0; width: 56px; height: 60px; border-radius: 45% 55% 50% 50%; background: #5bd58a; }
.ball { position: absolute; left: 2px; top: 5px; width: 62px; height: 62px; border-radius: 50%; border: 6px solid #4fd684; background: #f4f6f5; display: flex; align-items: center; justify-content: center; color: #333; font: 300 22px/30px "Noto Sans CJK SC", sans-serif; }
.ball small { font-size: 12px; font-weight: 400; }
</style>
